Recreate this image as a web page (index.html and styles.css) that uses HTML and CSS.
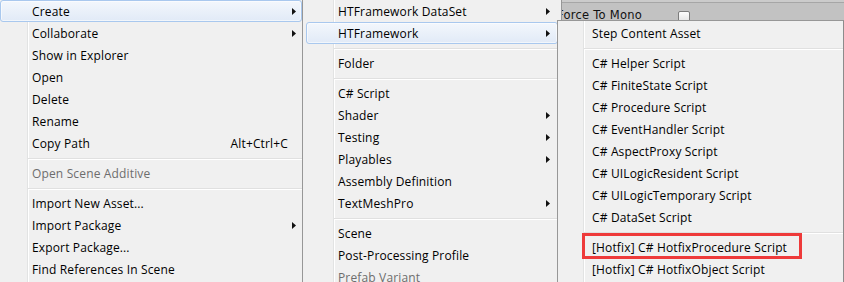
FILE: index.html
```html
<!DOCTYPE html>
<html>
<head>
<meta charset="utf-8">
<link rel="stylesheet" href="styles.css">
</head>
<body>
<div class="screen">
  <div class="menu m1">
    <div class="item hl"><span class="lbl">Create</span><svg class="arrow" width="4" height="7" viewBox="0 0 4 7"><path d="M0 0L4 3.5L0 7Z"/></svg></div>
    <div class="item"><span class="lbl">Collaborate</span><svg class="arrow" width="4" height="7" viewBox="0 0 4 7"><path d="M0 0L4 3.5L0 7Z"/></svg></div>
    <div class="item"><span class="lbl">Show in Explorer</span></div>
    <div class="item"><span class="lbl">Open</span></div>
    <div class="item"><span class="lbl">Delete</span></div>
    <div class="item"><span class="lbl">Rename</span></div>
    <div class="item"><span class="lbl">Copy Path</span><span class="key">Alt+Ctrl+C</span></div>
    <div class="sep"></div>
    <div class="item off"><span class="lbl">Open Scene Additive</span></div>
    <div class="sep"></div>
    <div class="item"><span class="lbl">Import New Asset...</span></div>
    <div class="item"><span class="lbl">Import Package</span><svg class="arrow" width="4" height="7" viewBox="0 0 4 7"><path d="M0 0L4 3.5L0 7Z"/></svg></div>
    <div class="item"><span class="lbl">Export Package...</span></div>
    <div class="item"><span class="lbl">Find References In Scene</span></div>
  </div>
  <div class="menu m2">
    <div class="item"><span class="lbl">HTFramework DataSet</span><svg class="arrow" width="4" height="7" viewBox="0 0 4 7"><path d="M0 0L4 3.5L0 7Z"/></svg></div>
    <div class="item hl"><span class="lbl">HTFramework</span><svg class="arrow" width="4" height="7" viewBox="0 0 4 7"><path d="M0 0L4 3.5L0 7Z"/></svg></div>
    <div class="sep"></div>
    <div class="item"><span class="lbl">Folder</span></div>
    <div class="sep"></div>
    <div class="item"><span class="lbl">C# Script</span></div>
    <div class="item"><span class="lbl">Shader</span><svg class="arrow" width="4" height="7" viewBox="0 0 4 7"><path d="M0 0L4 3.5L0 7Z"/></svg></div>
    <div class="item"><span class="lbl">Testing</span><svg class="arrow" width="4" height="7" viewBox="0 0 4 7"><path d="M0 0L4 3.5L0 7Z"/></svg></div>
    <div class="item"><span class="lbl">Playables</span><svg class="arrow" width="4" height="7" viewBox="0 0 4 7"><path d="M0 0L4 3.5L0 7Z"/></svg></div>
    <div class="item"><span class="lbl">Assembly Definition</span></div>
    <div class="item"><span class="lbl">TextMeshPro</span><svg class="arrow" width="4" height="7" viewBox="0 0 4 7"><path d="M0 0L4 3.5L0 7Z"/></svg></div>
    <div class="sep"></div>
    <div class="item"><span class="lbl">Scene</span></div>
    <div class="item"><span class="lbl">Post-Processing Profile</span></div>
    <div class="item off"><span class="lbl">Prefab Variant</span></div>
  </div>
  <div class="col3">
    <div class="inspector"><span class="field">Force To Mono</span><span class="check"></span></div>
    <div class="menu m3">
      <div class="item"><span class="lbl">Step Content Asset</span></div>
      <div class="sep"></div>
      <div class="item"><span class="lbl">C# Helper Script</span></div>
      <div class="item"><span class="lbl">C# FiniteState Script</span></div>
      <div class="item"><span class="lbl">C# Procedure Script</span></div>
      <div class="item"><span class="lbl">C# EventHandler Script</span></div>
      <div class="item"><span class="lbl">C# AspectProxy Script</span></div>
      <div class="item"><span class="lbl">C# UILogicResident Script</span></div>
      <div class="item"><span class="lbl">C# UILogicTemporary Script</span></div>
      <div class="item"><span class="lbl">C# DataSet Script</span></div>
      <div class="sep"></div>
      <div class="item marked"><span class="lbl">[Hotfix] C# HotfixProcedure Script</span></div>
      <div class="item"><span class="lbl">[Hotfix] C# HotfixObject Script</span></div>
    </div>
  </div>
</div>
</body>
</html>
```
FILE: styles.css
```css
html, body {
  margin: 0;
  padding: 0;
  background: #f0f0f0;
}

.screen {
  display: flex;
  align-items: flex-start;
  width: 844px;
  height: 282px;
  overflow: hidden;
  font-family: "Open Sans", "Noto Sans CJK SC", sans-serif;
  font-size: 12px;
  letter-spacing: 0.15px;
  color: #000;
}

.menu {
  box-sizing: border-box;
  flex: none;
  height: 300px;
  --gut: 27px;
  background:
    linear-gradient(90deg, transparent 0 var(--gut), #e2e3e3 var(--gut) calc(var(--gut) + 1px), #ffffff calc(var(--gut) + 1px) calc(var(--gut) + 2px), transparent calc(var(--gut) + 2px)),
    #f0f0f0;
}

.m1 {
  width: 302px;
  --gut: 27px;
}

.m2 {
  position: relative;
  z-index: 1;
  width: 260px;
  padding: 0 3px;
  border-left: 1px solid #979797;
  border-right: 1px solid #979797;
  --gut: 30px;
}

.col3 {
  flex: 1;
  margin-left: -5px;
  display: flex;
  flex-direction: column;
  min-width: 0;
}

.inspector {
  display: flex;
  align-items: flex-start;
  height: 20px;
  overflow: hidden;
  background: linear-gradient(#cbcbcb 0 2px, #a6a6a6 2px 3px, #c2c2c2 3px);
  font-family: "DejaVu Sans", sans-serif;
  font-size: 11.5px;
  letter-spacing: 0.25px;
  color: #111;
}

.field {
  width: 121px;
  flex: none;
  padding-top: 8px;
  line-height: 14px;
  white-space: nowrap;
}

.check {
  box-sizing: border-box;
  width: 12px;
  height: 12px;
  margin-top: 11px;
  border: 1px solid #7c7c7c;
  border-radius: 2px;
  background: linear-gradient(#fdfdfd, #e2e2e2);
}

.m3 {
  position: relative;
  z-index: 2;
  width: 100%;
  padding: 1px 3px 0 3px;
  border: 1px solid #979797;
  border-right-color: #8c8c8c;
  --gut: 25px;
}

.item {
  box-sizing: border-box;
  display: flex;
  align-items: center;
  height: 22px;
  padding: 0 5px 0 31px;
  border: 1px solid transparent;
  border-radius: 3px;
  white-space: nowrap;
}

.m2 .item, .m3 .item {
  padding-right: 7px;
}

.m3 .item {
  padding-left: 30px;
}

.item .lbl {
  flex: 1;
}

.item .key {
  margin-right: 8px;
}

.item.off {
  color: #6d6d6d;
}

.item.hl {
  border-color: #a9c8ee;
  background: linear-gradient(#f3f7fc, #e1eaf7);
  box-shadow: inset 0 0 0 1px rgba(255, 255, 255, 0.55);
}

.arrow {
  flex: none;
  fill: #111;
}

.sep {
  margin: 4px 0 2px calc(var(--gut) + 1px);
  border-top: 1px solid #e0e0e0;
  border-bottom: 1px solid #ffffff;
}

.m2 .sep {
  margin-right: -3px;
  margin-left: calc(var(--gut) - 2px);
}

.m3 .sep {
  margin-right: -3px;
  margin-left: calc(var(--gut) - 2px);
}

.item.marked {
  position: relative;
}

.item.marked::after {
  content: "";
  position: absolute;
  left: 20px;
  top: -4px;
  width: 220px;
  height: 26px;
  box-sizing: border-box;
  border: 3px solid #ee3a3a;
}
```
